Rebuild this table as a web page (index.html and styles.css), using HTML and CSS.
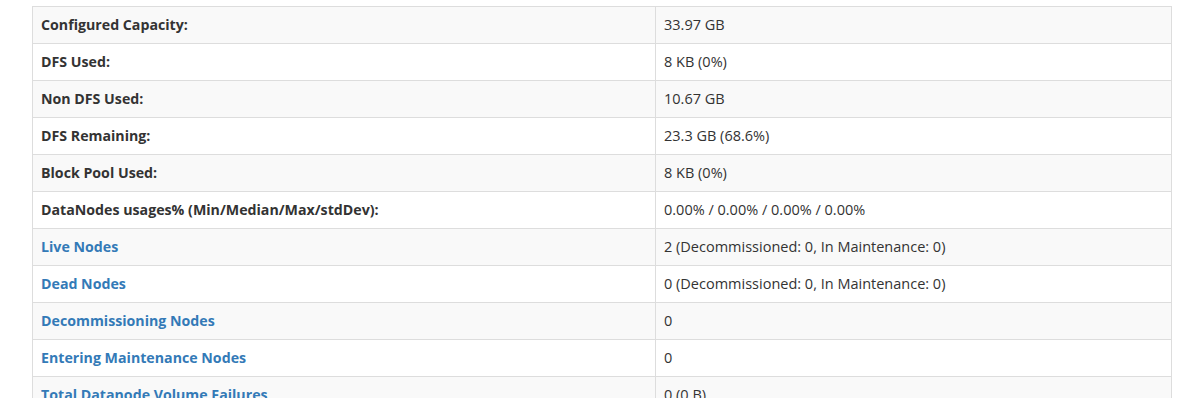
FILE: index.html
```html
<!DOCTYPE html>
<html>
<head>
<meta charset="utf-8">
<link rel="stylesheet" href="styles.css">
</head>
<body>
<div class="container">
  <table class="info-table">
    <tbody>
      <tr><th>Configured Capacity:</th><td>33.97 GB</td></tr>
      <tr><th>DFS Used:</th><td>8 KB (0%)</td></tr>
      <tr><th>Non DFS Used:</th><td>10.67 GB</td></tr>
      <tr><th>DFS Remaining:</th><td>23.3 GB (68.6%)</td></tr>
      <tr><th>Block Pool Used:</th><td>8 KB (0%)</td></tr>
      <tr><th>DataNodes usages% (Min/Median/Max/stdDev):</th><td>0.00% / 0.00% / 0.00% / 0.00%</td></tr>
      <tr><th><a href="#">Live Nodes</a></th><td>2 (Decommissioned: 0, In Maintenance: 0)</td></tr>
      <tr><th><a href="#">Dead Nodes</a></th><td>0 (Decommissioned: 0, In Maintenance: 0)</td></tr>
      <tr><th><a href="#">Decommissioning Nodes</a></th><td>0</td></tr>
      <tr><th><a href="#">Entering Maintenance Nodes</a></th><td>0</td></tr>
      <tr><th><a href="#">Total Datanode Volume Failures</a></th><td>0 (0 B)</td></tr>
    </tbody>
  </table>
</div>
</body>
</html>
```
FILE: styles.css
```css
html, body {
  margin: 0;
  padding: 0;
  background: #fff;
}
body {
  font-family: "Open Sans", "Noto Sans", sans-serif;
  font-size: 14px;
  line-height: 20px;
  color: #333;
}
.container {
  width: 1140px;
  margin: 6px auto 0;
}
.info-table {
  width: 100%;
  border-collapse: collapse;
  border: 1px solid #ddd;
}
.info-table th,
.info-table td {
  border: 1px solid #ddd;
  padding: 8px;
  text-align: left;
  vertical-align: top;
  line-height: 20px;
}
.info-table th {
  width: 606px;
  font-size: 14.2px;
  font-weight: 700;
}
.info-table td {
  font-size: 14.5px;
  font-weight: 400;
}
.info-table tr:nth-child(odd) {
  background: #f9f9f9;
}
.info-table a {
  color: #337ab7;
  text-decoration: none;
}
```
